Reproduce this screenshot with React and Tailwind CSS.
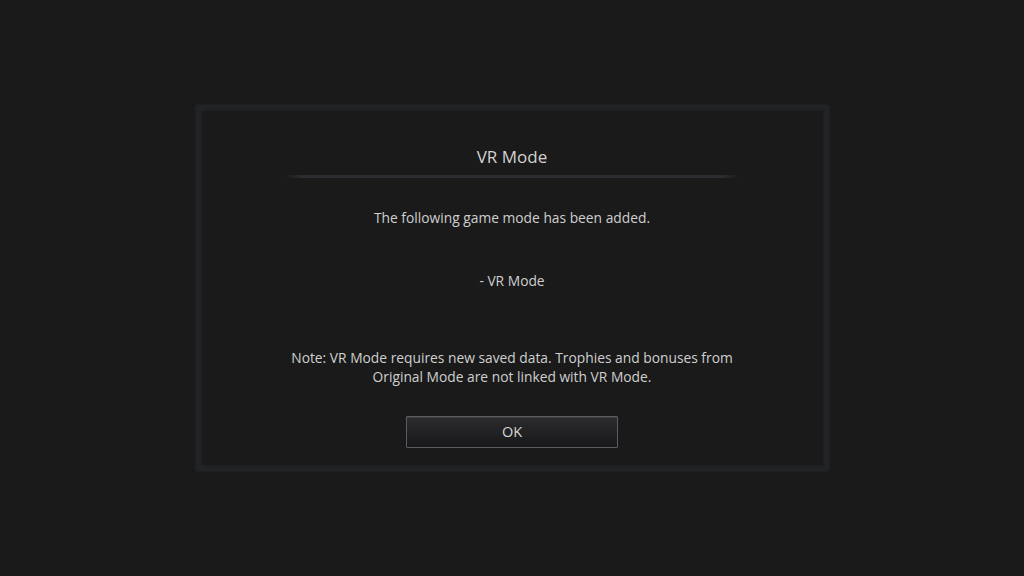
import React from 'react';

const App = () => {
  return (
    <div
      className="w-[1024px] h-[576px] bg-[#1a1a1a] flex items-center justify-center text-[#cfcfcf]"
      style={{ fontFamily: '"Open Sans", "Noto Sans", sans-serif' }}
    >
      {/* Dialog frame */}
      <div className="w-[633px] h-[366px] rounded-[3px] border-[5px] border-[#212326] shadow-[0_0_4px_rgba(60,62,66,0.35),inset_0_0_3px_rgba(60,62,66,0.35)] bg-[#1a1a1a] flex flex-col items-center">
        <div className="mt-[35px] h-[24px] leading-[24px] text-[17px] text-[#d2d2d2]">VR Mode</div>

        {/* divider */}
        <div className="mt-[6px] w-[456px] h-[3px] rounded-full bg-[linear-gradient(to_right,transparent,#2b2d31_4%,#2b2d31_96%,transparent)]" />

        <div className="mt-[30px] text-[13.8px] leading-[19px]">The following game mode has been added.</div>

        <div className="mt-[44px] text-[13.8px] leading-[19px]">- VR Mode</div>

        <div className="mt-[58px] text-[13.8px] leading-[19px] text-center">
          Note: VR Mode requires new saved data. Trophies and bonuses from
          <br />
          Original Mode are not linked with VR Mode.
        </div>

        {/* OK button */}
        <button className="mt-[30px] w-[212px] h-[32px] border border-[#5c5d60] rounded-[1px] bg-gradient-to-b from-[#2c2c2e] to-[#18181a] shadow-[inset_0_1px_0_rgba(255,255,255,0.08)] text-[14.5px] text-[#d6d6d6]">
          OK
        </button>
      </div>
    </div>
  );
};

export default App;
